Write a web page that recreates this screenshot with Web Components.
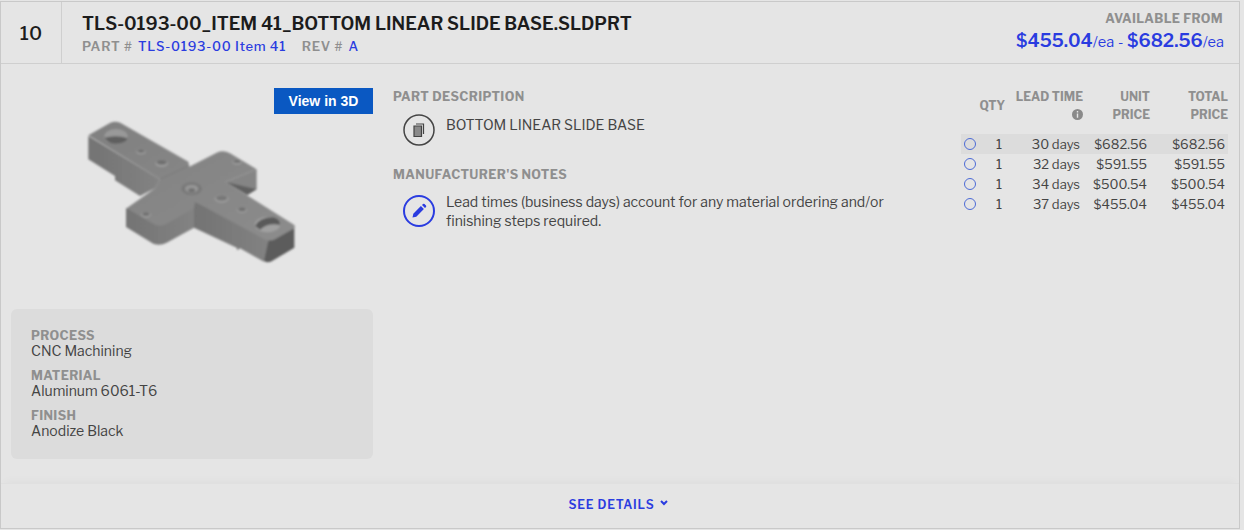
<!DOCTYPE html>
<html>
<head>
<meta charset="utf-8">
<style>
    html, body { margin: 0; padding: 0; background: #e5e5e5; }
    body { font-family: "Liberation Sans", sans-serif; color: #444; }
</style>
</head>
<body>
<part-card>
    <part-header slot="header" line="10" title-text="TLS-0193-00_ITEM 41_BOTTOM LINEAR SLIDE BASE.SLDPRT" part="TLS-0193-00 Item 41" rev="A" low="$455.04" high="$682.56"></part-header>
    <part-overview slot="left"></part-overview>
    <part-notes slot="middle"></part-notes>
    <price-table slot="right"></price-table>
</part-card>

<script>
const FONT = '"Libre Franklin", "Liberation Sans", sans-serif';
const BLUE = '#2a3ce0';

customElements.define('part-card', class extends HTMLElement {
    constructor() {
        super();
        this.attachShadow({mode: 'open'}).innerHTML = `
<style>
    :host { display: flex; flex-direction: column; width: 1240px; height: 528px; margin-top: 1px; box-sizing: border-box; border: 1px solid #c9c9c9; background: #e5e5e5; }
    .body { flex: 1; display: flex; padding: 24px 11px 0 10px; min-height: 0; }
    .left { width: 362px; flex: none; }
    .middle { flex: 1; padding-left: 20px; }
    .right { flex: none; width: 267px; }
    footer { height: 45px; flex: none; box-sizing: border-box; display: flex; align-items: center; justify-content: center; gap: 6px; padding: 0 3px 4px 0; border-top: 1px solid #e0e0e0; box-shadow: 0 -6px 8px -4px rgba(0,0,0,.03); color: ${BLUE}; font: 600 12px ${FONT}; letter-spacing: .75px; }
    svg { width: 8px; height: 6px; margin-top: -2px; }
</style>
<slot name="header"></slot>
<div class="body">
    <div class="left"><slot name="left"></slot></div>
    <div class="middle"><slot name="middle"></slot></div>
    <div class="right"><slot name="right"></slot></div>
</div>
<footer>SEE DETAILS <svg viewBox="0 0 8 6"><path d="M1 1l3 3 3-3" fill="none" stroke="${BLUE}" stroke-width="2"/></svg></footer>`;
    }
});

customElements.define('part-header', class extends HTMLElement {
    constructor() {
        super();
        const a = n => this.getAttribute(n);
        this.attachShadow({mode: 'open'}).innerHTML = `
<style>
    :host { display: flex; height: 62px; flex: none; box-sizing: border-box; border-bottom: 1px solid #cfcfcf; font-family: ${FONT}; }
    .line { width: 60px; flex: none; border-right: 1px solid #cfcfcf; display: flex; align-items: center; justify-content: center; font-size: 19px; font-weight: 500; color: #1c1c1c; padding-top: 1px; }
    .info { flex: 1; padding: 11px 0 0 20px; }
    h1 { margin: 0; font-size: 18px; line-height: 22px; font-weight: 600; color: #1c1c1c; white-space: nowrap; }
    .sub { margin-top: 3px; font-size: 13px; line-height: 16px; font-weight: 600; color: #8f8f8f; letter-spacing: .75px; }
    .sub b { font-weight: 500; color: ${BLUE}; margin: 0 12px 0 2px; }
    .sub b + b { margin-left: 2px; }
    .price { text-align: right; padding: 9px 16px 0 0; }
    .from { font-size: 12.500px; line-height: 15px; font-weight: 700; color: #8f8f8f; letter-spacing: .35px; }
    .range { margin: 3px -1px 0 0; color: ${BLUE}; font-size: 18px; font-weight: 600; line-height: 24px; }
    .range small { font-size: 14.500px; font-weight: 400; }
    .range i { font-style: normal; font-size: 14px; font-weight: 400; }
</style>
<div class="line">${a('line')}</div>
<div class="info">
    <h1>${a('title-text')}</h1>
    <div class="sub">PART # <b>${a('part')}</b> REV # <b>${a('rev')}</b></div>
</div>
<div class="price">
    <div class="from">AVAILABLE FROM</div>
    <div class="range">${a('low')}<small>/ea</small> <i>-</i> ${a('high')}<small>/ea</small></div>
</div>`;
    }
});

customElements.define('part-overview', class extends HTMLElement {
    constructor() {
        super();
        this.attachShadow({mode: 'open'}).innerHTML = `
<style>
    :host { display: block; font-family: ${FONT}; }
    .view { height: 195px; position: relative; }
    a { position: absolute; right: 0; top: 0; width: 99px; height: 26px; display: flex; align-items: center; justify-content: center; background: #0a58c2; color: #fff; font: 700 14px "Liberation Sans", sans-serif; }
    svg { position: absolute; left: 49px; top: 13px; width: 260px; height: 180px; }
    .specs { margin-top: 26px; height: 150px; box-sizing: border-box; padding: 20px 20px; border-radius: 6px; background: #dcdcdc; }
    dt { font-size: 12.500px; line-height: 14px; font-weight: 700; color: #8f8f8f; letter-spacing: .35px; }
    dd { margin: 0 0 10px; font-size: 14px; line-height: 16px; color: #444; }
    dl { margin: 0; }
</style>
<div class="view">
    <a>View in 3D</a>
    <svg viewBox="0 0 780 540">
        <defs>
            <filter id="soft"><feGaussianBlur stdDeviation="2.500"/></filter>
            <linearGradient id="top" x1="0" y1="0" x2="1" y2="1"><stop offset="0" stop-color="#808080"/><stop offset="1" stop-color="#8c8c8c"/></linearGradient>
            <linearGradient id="side" x1="0" y1="0" x2="1" y2="0"><stop offset="0" stop-color="#737373"/><stop offset="1" stop-color="#838383"/></linearGradient>
        </defs>
        <g filter="url(#soft)">
            <path d="M85 105V175L165 225V238L240 285 285 262 300 235Z" fill="url(#side)"/>
            <path d="M590 205V265L562 282 497 243Z" fill="#858585"/>
            <path d="M497 243L562 282 590 265Z" fill="#606060"/>
            <path d="M198 322V378L280 428Q300 436 320 425L402 380V300Z" fill="url(#side)"/>
            <path d="M402 300V380L530 440 532 448 540 442 612 482 640 415Z" fill="url(#side)"/>
            <path d="M625 420L703 372V440L640 478Q625 488 612 480Z" fill="#5c5c5c"/>
            <path d="M85 103L150 66Q165 58 182 66L385 182 388 197 470 155Q490 146 510 157L590 205 497 243 703 372 703 382 645 415Q630 423 612 414L405 302 402 322 320 368Q300 380 280 368L200 322 285 262 290 252 300 235Z" fill="url(#top)"/>
            <path d="M300 235L385 195" stroke="#7a7a7a" stroke-width="3"/>
            <ellipse cx="168" cy="106" rx="35" ry="22" fill="#999"/>
            <path d="M134 110Q170 100 203 112 195 128 168 128 145 128 134 110Z" fill="#5e5e5e"/>
            <ellipse cx="622" cy="371" rx="38" ry="23" fill="#a0a0a0"/>
            <path d="M585 375Q598 349 640 349 662 356 660 372 625 364 600 386Z" fill="#5a5a5a"/>
            <ellipse cx="243" cy="152" rx="14" ry="8" fill="#9b9b9b"/><ellipse cx="243" cy="150" rx="11" ry="5" fill="#707070"/>
            <ellipse cx="305" cy="187" rx="19" ry="11" fill="#9b9b9b"/><ellipse cx="305" cy="184" rx="15" ry="7" fill="#707070"/>
            <ellipse cx="531" cy="183" rx="14" ry="8" fill="#9b9b9b"/><ellipse cx="531" cy="181" rx="11" ry="5" fill="#707070"/>
            <ellipse cx="395" cy="263" rx="31" ry="19" fill="#787878"/><ellipse cx="395" cy="263" rx="20" ry="12" fill="#959595"/><ellipse cx="395" cy="268" rx="10" ry="6" fill="#707070"/>
            <ellipse cx="485" cy="293" rx="21" ry="12" fill="#9b9b9b"/><ellipse cx="485" cy="291" rx="17" ry="8" fill="#787878"/>
            <ellipse cx="546" cy="327" rx="15" ry="9" fill="#9b9b9b"/><ellipse cx="546" cy="325" rx="11" ry="6" fill="#707070"/>
            <ellipse cx="258" cy="341" rx="15" ry="9" fill="#9b9b9b"/><ellipse cx="258" cy="339" rx="11" ry="6" fill="#727272"/>
        </g>
    </svg>
</div>
<div class="specs">
    <dl>
        <dt>PROCESS</dt><dd>CNC Machining</dd>
        <dt>MATERIAL</dt><dd>Aluminum 6061-T6</dd>
        <dt>FINISH</dt><dd>Anodize Black</dd>
    </dl>
</div>`;
    }
});

customElements.define('part-notes', class extends HTMLElement {
    constructor() {
        super();
        this.attachShadow({mode: 'open'}).innerHTML = `
<style>
    :host { display: block; font-family: ${FONT}; }
    h2 { margin: 0; padding-top: 1px; font-size: 12.500px; line-height: 16px; font-weight: 700; color: #8f8f8f; letter-spacing: .4px; }
    .row { display: flex; gap: 11px; margin: 9px 0 0 10px; min-height: 32px; font-size: 14px; line-height: 19px; color: #444; width: 500px; }
    .row + h2 { margin-top: 20px; }
    svg { width: 32px; height: 32px; flex: none; }
    .notes svg { margin-top: 3px; }
    p { margin: 0; }
    .desc p { padding-top: 1px; }
</style>
<h2>PART DESCRIPTION</h2>
<div class="row desc">
    <svg viewBox="0 0 32 32"><circle cx="16" cy="16" r="15" fill="none" stroke="#444" stroke-width="1.500"/><path d="M13 10h7.500v10" fill="none" stroke="#444" stroke-width="1.200"/><path d="M11 12h7.500v10.500H11z" fill="#8a8a8a" stroke="#444" stroke-width="1.200"/></svg>
    <p>BOTTOM LINEAR SLIDE BASE</p>
</div>
<h2>MANUFACTURER'S NOTES</h2>
<div class="row notes">
    <svg viewBox="0 0 32 32"><circle cx="16" cy="16" r="15" fill="none" stroke="${BLUE}" stroke-width="2"/><path d="M9.500 22.500l.8-3.800 7.600-7.600 3 3-7.600 7.600zM19 10l1-1q.8-.6 1.500 0l1.500 1.500q.6.700 0 1.500l-1 1z" fill="${BLUE}"/></svg>
    <p>Lead times (business days) account for any material ordering and/or finishing steps required.</p>
</div>`;
    }
});

customElements.define('price-table', class extends HTMLElement {
    constructor() {
        super();
        const rows = [['30 days', '$682.56'], ['32 days', '$591.55'], ['34 days', '$500.54'], ['37 days', '$455.04']];
        this.attachShadow({mode: 'open'}).innerHTML = `
<style>
    :host { display: block; font-family: ${FONT}; }
    .grid { display: grid; grid-template-columns: 18px 26px 78px 67px 78px; }
    .head { font-size: 12px; line-height: 18px; font-weight: 700; color: #8f8f8f; text-align: right; height: 46px; }
    .qty { padding-top: 9px; height: 37px; }
    .i { display: inline-block; width: 11px; height: 11px; vertical-align: -1px; }
    .row { display: contents; }
    .cell { height: 20px; font-size: 13px; line-height: 20px; text-align: right; padding-right: 3px; color: #444; }
    .row.on .cell { background: #dcdcdc; }
    .cell.radio { padding: 0; display: flex; align-items: center; justify-content: center; }
    .radio span { width: 12px; height: 12px; box-sizing: border-box; border: 1.500px solid #4d6bd6; border-radius: 50%; display: block; }
</style>
<div class="grid">
    <div class="head"></div>
    <div class="head qty">QTY</div>
    <div class="head">LEAD TIME<br><svg class="i" viewBox="0 0 11 11"><circle cx="5.500" cy="5.500" r="5.500" fill="#8a8a8a"/><path d="M4.800 2h1.400v1.400H4.800zM4.800 4.500h1.400v4.300H4.800z" fill="#e5e5e5"/></svg></div>
    <div class="head">UNIT<br>PRICE</div>
    <div class="head">TOTAL<br>PRICE</div>
    ${rows.map(([days, price], i) => `
    <div class="row ${i === 0 ? 'on' : ''}">
        <div class="cell radio"><span></span></div>
        <div class="cell">1</div>
        <div class="cell">${days}</div>
        <div class="cell">${price}</div>
        <div class="cell">${price}</div>
    </div>`).join('')}
</div>`;
    }
});
</script>
</body>
</html>
